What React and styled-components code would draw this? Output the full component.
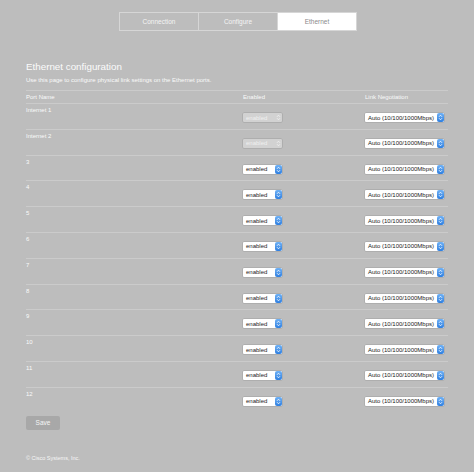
import React from "react";
import styled, { createGlobalStyle } from "styled-components";

const GlobalStyle = createGlobalStyle`
  html, body {
    margin: 0;
    padding: 0;
    background: #bdbdbd;
  }
  body {
    font-family: "Liberation Sans", Arial, sans-serif;
    color: #fafafa;
  }
`;

const Page = styled.div`
  width: 474px;
  height: 472px;
  box-sizing: border-box;
  padding: 12px 26px 0 26px;
  background: #bdbdbd;
  display: flex;
  flex-direction: column;
`;

const Tabs = styled.div`
  align-self: center;
  display: flex;
  width: 238px;
  height: 19px;
  margin-left: 2px;
  border: 1px solid #d6d6d6;
  box-sizing: border-box;
`;

const Tab = styled.div`
  flex: 1;
  display: flex;
  align-items: center;
  justify-content: center;
  font-size: 6.5px;
  color: ${(p) => (p.$active ? "#8a8a8a" : "#f4f4f4")};
  background: ${(p) => (p.$active ? "#ffffff" : "transparent")};
  & + & {
    border-left: 1px solid #d6d6d6;
  }
`;

const Title = styled.h1`
  margin: 30px 0 0 0;
  font-size: 9.8px;
  font-weight: normal;
  line-height: 12px;
  color: #fbfbfb;
`;

const Intro = styled.p`
  margin: 3px 0 0 0;
  font-size: 6px;
  line-height: 8px;
  color: #fafafa;
`;

const Table = styled.div`
  margin-top: 6px;
  display: flex;
  flex-direction: column;
  width: 422px;
`;

const Row = styled.div`
  display: grid;
  grid-template-columns: 217px 122px 83px;
  height: ${(p) => (p.$header ? "13px" : "25.8px")};
  border-top: 1px solid rgba(255, 255, 255, 0.22);
  box-sizing: border-box;
  font-size: 6px;
`;

const Cell = styled.div`
  padding-top: 3px;
  line-height: 7px;
  color: #fafafa;
`;

const SelectCell = styled.div`
  padding-top: 9px;
  display: flex;
`;

const SelectBox = styled.div`
  display: flex;
  align-items: center;
  height: 9px;
  box-sizing: border-box;
  border-radius: 1px;
  background: ${(p) => (p.$disabled ? "#d2d2d2" : "#ffffff")};
  color: ${(p) => (p.$disabled ? "#f0f0f0" : "#222222")};
  font-size: 6px;
  box-shadow: 0 0 0 0.5px rgba(0, 0, 0, 0.15);
`;

const SelectText = styled.span`
  width: ${(p) => p.$w}px;
  padding-left: 3px;
  box-sizing: border-box;
  white-space: nowrap;
  overflow: hidden;
`;

const Stepper = styled.span`
  width: 7px;
  height: 9px;
  border-radius: 2px;
  display: flex;
  align-items: center;
  justify-content: center;
  background: ${(p) =>
    p.$disabled ? "transparent" : "linear-gradient(#6fb1f5, #2f7fe0)"};
`;

const SaveButton = styled.button`
  align-self: flex-start;
  margin-top: 3px;
  width: 34px;
  height: 14px;
  padding: 0;
  border: none;
  border-radius: 2px;
  background: #a8a8a8;
  color: #f5f5f5;
  font-family: "Liberation Sans", Arial, sans-serif;
  font-size: 6.5px;
`;

const Footer = styled.div`
  margin-top: 25px;
  font-size: 5.5px;
  color: #f6f6f6;
`;

function Arrows({ color }) {
  return (
    <svg width="5" height="7" viewBox="0 0 5 7">
      <path d="M1 2.8 L2.5 1.2 L4 2.8" fill="none" stroke={color} strokeWidth="0.8" />
      <path d="M1 4.2 L2.5 5.8 L4 4.2" fill="none" stroke={color} strokeWidth="0.8" />
    </svg>
  );
}

function Select({ value, width, disabled }) {
  return (
    <SelectBox $disabled={disabled}>
      <SelectText $w={width}>{value}</SelectText>
      <Stepper $disabled={disabled}>
        <Arrows color={disabled ? "#f2f2f2" : "#ffffff"} />
      </Stepper>
    </SelectBox>
  );
}

const ports = [
  { name: "Internet 1", disabled: true },
  { name: "Internet 2", disabled: true },
  ...["3", "4", "5", "6", "7", "8", "9", "10", "11", "12"].map((n) => ({
    name: n,
    disabled: false,
  })),
];

export default function App() {
  return (
    <>
      <GlobalStyle />
      <Page>
        <Tabs>
          <Tab>Connection</Tab>
          <Tab>Configure</Tab>
          <Tab $active>Ethernet</Tab>
        </Tabs>
        <Title>Ethernet configuration</Title>
        <Intro>
          Use this page to configure physical link settings on the Ethernet ports.
        </Intro>
        <Table>
          <Row $header>
            <Cell>Port Name</Cell>
            <Cell>Enabled</Cell>
            <Cell>Link Negotiation</Cell>
          </Row>
          {ports.map((p) => (
            <Row key={p.name}>
              <Cell>{p.name}</Cell>
              <SelectCell>
                <Select value="enabled" width={32} disabled={p.disabled} />
              </SelectCell>
              <SelectCell>
                <Select value="Auto (10/100/1000Mbps)" width={72} />
              </SelectCell>
            </Row>
          ))}
        </Table>
        <SaveButton>Save</SaveButton>
        <Footer>© Cisco Systems, Inc.</Footer>
      </Page>
    </>
  );
}
